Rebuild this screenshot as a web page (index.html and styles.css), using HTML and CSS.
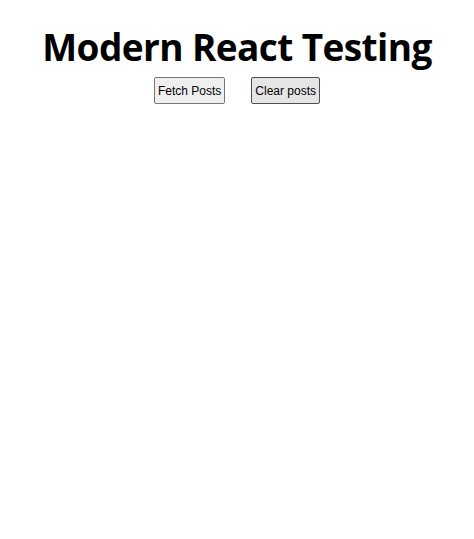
FILE: index.html
```html
<!DOCTYPE html>
<html>
<head>
<meta charset="utf-8">
<link rel="stylesheet" href="styles.css">
</head>
<body>
<div class="app">
  <h1 class="title">Modern React Testing</h1>
  <div class="actions">
    <button class="btn">Fetch Posts</button>
    <button class="btn btn-active">Clear posts</button>
  </div>
</div>
</body>
</html>
```
FILE: styles.css
```css
html, body {
  margin: 0;
  padding: 0;
  background: #ffffff;
}
.app {
  display: flex;
  flex-direction: column;
  align-items: center;
  padding-top: 25px;
}
.title {
  margin: 0;
  font-family: "Open Sans", sans-serif;
  font-weight: 700;
  font-size: 37px;
  line-height: 44px;
  color: #000;
  letter-spacing: -0.6px;
}
.actions {
  display: flex;
  gap: 26px;
  margin-top: 8px;
}
.btn {
  font-family: "Liberation Sans", Arial, sans-serif;
  font-size: 12px;
  color: #000;
  height: 27px;
  padding: 0 3px;
  background: #efefef;
  border: 1px solid #767676;
  border-radius: 2px;
}
.btn-active {
  background: #e5e5e5;
  border-color: #4f4f4f;
}
```
